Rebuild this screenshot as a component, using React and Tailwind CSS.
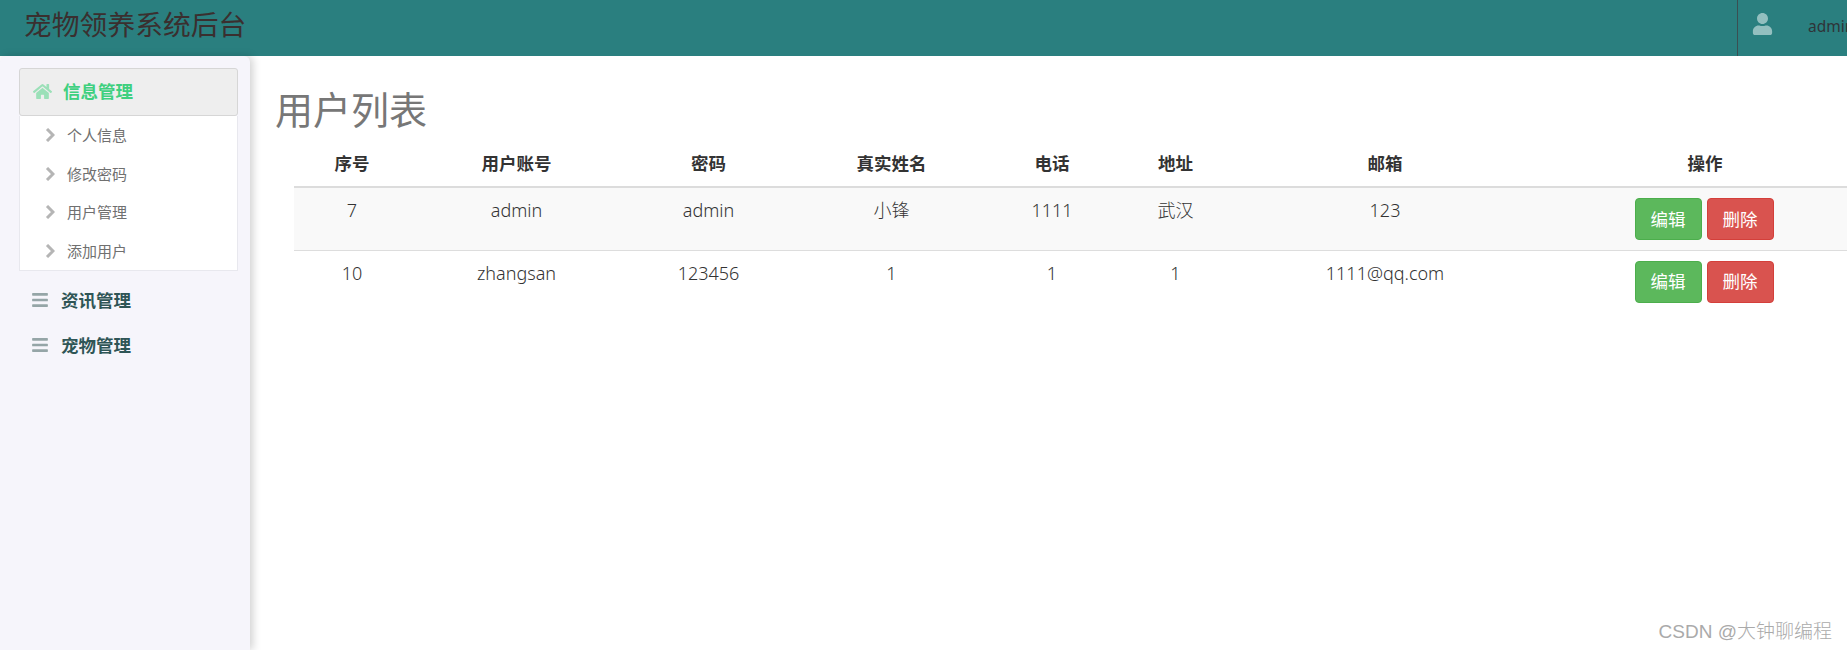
import { FaHome, FaUser, FaBars } from 'react-icons/fa';

const columns = [
  { label: '序号', width: 'w-[116px]' },
  { label: '用户账号', width: 'w-[213px]' },
  { label: '密码', width: 'w-[171px]' },
  { label: '真实姓名', width: 'w-[195px]' },
  { label: '电话', width: 'w-[126px]' },
  { label: '地址', width: 'w-[121px]' },
  { label: '邮箱', width: 'w-[298px]' },
  { label: '操作', width: 'w-[342px]' },
];

const users = [
  { id: 7, account: 'admin', password: 'admin', name: '小锋', phone: '1111', address: '武汉', email: '123' },
  { id: 10, account: 'zhangsan', password: '123456', name: '1', phone: '1', address: '1', email: '1111@qq.com' },
];

const subItems = ['个人信息', '修改密码', '用户管理', '添加用户'];

function Header() {
  return (
    <header className="h-[56px] bg-[#2a7f7f] flex justify-between overflow-hidden">
      <h1 className="pl-[24px] pt-[4px] text-[27.8px] leading-[40px] text-[#3a2f2f]">宠物领养系统后台</h1>
      <div className="w-[110px] shrink-0 border-l border-[#3a4f52] flex items-start whitespace-nowrap">
        <FaUser className="shrink-0 ml-[14px] mt-[13px] w-[21px] h-[22px] text-[#93bfbf]" />
        <span className="ml-[35px] mt-[16px] text-[15.5px] leading-[20px] text-[#2f3438]">admin</span>
      </div>
    </header>
  );
}

function Sidebar() {
  return (
    <aside className="w-[250px] shrink-0 bg-[#f6f5fb] rounded-tl-md rounded-tr-md shadow-[3px_0_8px_rgba(0,0,0,0.18)] pt-[12px] pl-[19px] pr-[12px]">
      <div className="h-[48px] bg-[#eeeeee] border border-[#d6d6d6] rounded-[3px] flex items-center pl-[13px] pb-[2px]">
        <FaHome className="shrink-0 w-[19px] h-[17px] text-[#9be0b8]" />
        <span className="ml-[11px] text-[17.5px] font-bold text-[#3fd07f]">信息管理</span>
      </div>
      <ul className="h-[155px] bg-white border border-t-0 border-[#e8e8ee]">
        {subItems.map((item) => (
          <li key={item} className="h-[38.6px] flex items-center pl-[25px]">
            <svg viewBox="0 0 10 14" className="shrink-0 w-[10px] h-[14px] text-[#b5b5b5]" fill="none" stroke="currentColor" strokeWidth="3">
              <polyline points="2,1 8,7 2,13" />
            </svg>
            <span className="ml-[12px] text-[15px] text-[#707070]">{item}</span>
          </li>
        ))}
      </ul>
      <div className="mt-[6px]">
        {['资讯管理', '宠物管理'].map((item) => (
          <div key={item} className="h-[45.5px] flex items-center pl-[12px]">
            <FaBars className="shrink-0 w-[18px] h-[18px] text-[#95a5a7]" />
            <span className="ml-[12px] text-[17.5px] font-bold text-[#2f5556]">{item}</span>
          </div>
        ))}
      </div>
    </aside>
  );
}

function UserTable() {
  return (
    <table className="table-fixed w-[1582px] border-collapse text-center text-[18px] text-[#333]">
      <thead>
        <tr className="h-[57px] border-b-2 border-[#dcdcdc]">
          {columns.map((col) => (
            <th key={col.label} className={`${col.width} text-[17.5px] font-bold pt-[11px] align-middle`}>{col.label}</th>
          ))}
        </tr>
      </thead>
      <tbody>
        {users.map((user, i) => (
          <tr key={user.id} className={i === 0 ? 'h-[63px] bg-[#f9f9f9] border-b border-[#dddddd]' : 'h-[63px]'}>
            {[user.id, user.account, user.password, user.name, user.phone, user.address, user.email].map((value, j) => (
              <td key={j} className="align-top pt-[9px] leading-[26px] font-light">{value}</td>
            ))}
            <td className="align-top pt-[10px]">
              <div className="flex justify-center gap-[5px] pr-[2px]">
                <button className="w-[67px] h-[42px] bg-[#5cb85c] border border-[#4cae4c] rounded-[4px] text-white text-[17.5px]">编辑</button>
                <button className="w-[67px] h-[42px] bg-[#d9534f] border border-[#d43f3a] rounded-[4px] text-white text-[17.5px]">删除</button>
              </div>
            </td>
          </tr>
        ))}
      </tbody>
    </table>
  );
}

export default function App() {
  return (
    <div className="relative h-[650px] overflow-hidden bg-white font-['Noto_Sans','Noto_Sans_CJK_SC',sans-serif]">
      <Header />
      <div className="flex h-[594px]">
        <Sidebar />
        <main className="flex-1 min-w-0 overflow-hidden pl-[25px]">
          <h2 className="mt-[30px] h-[44px] text-[38px] leading-[46px] font-normal text-[#777]">用户列表</h2>
          <div className="pl-[19px]">
            <UserTable />
          </div>
        </main>
      </div>
      <span className="absolute right-[15px] bottom-[4px] text-[19px] font-light text-[#aaaaaa] font-['Liberation_Sans','Noto_Sans_CJK_SC',sans-serif]">CSDN @大钟聊编程</span>
    </div>
  );
}
